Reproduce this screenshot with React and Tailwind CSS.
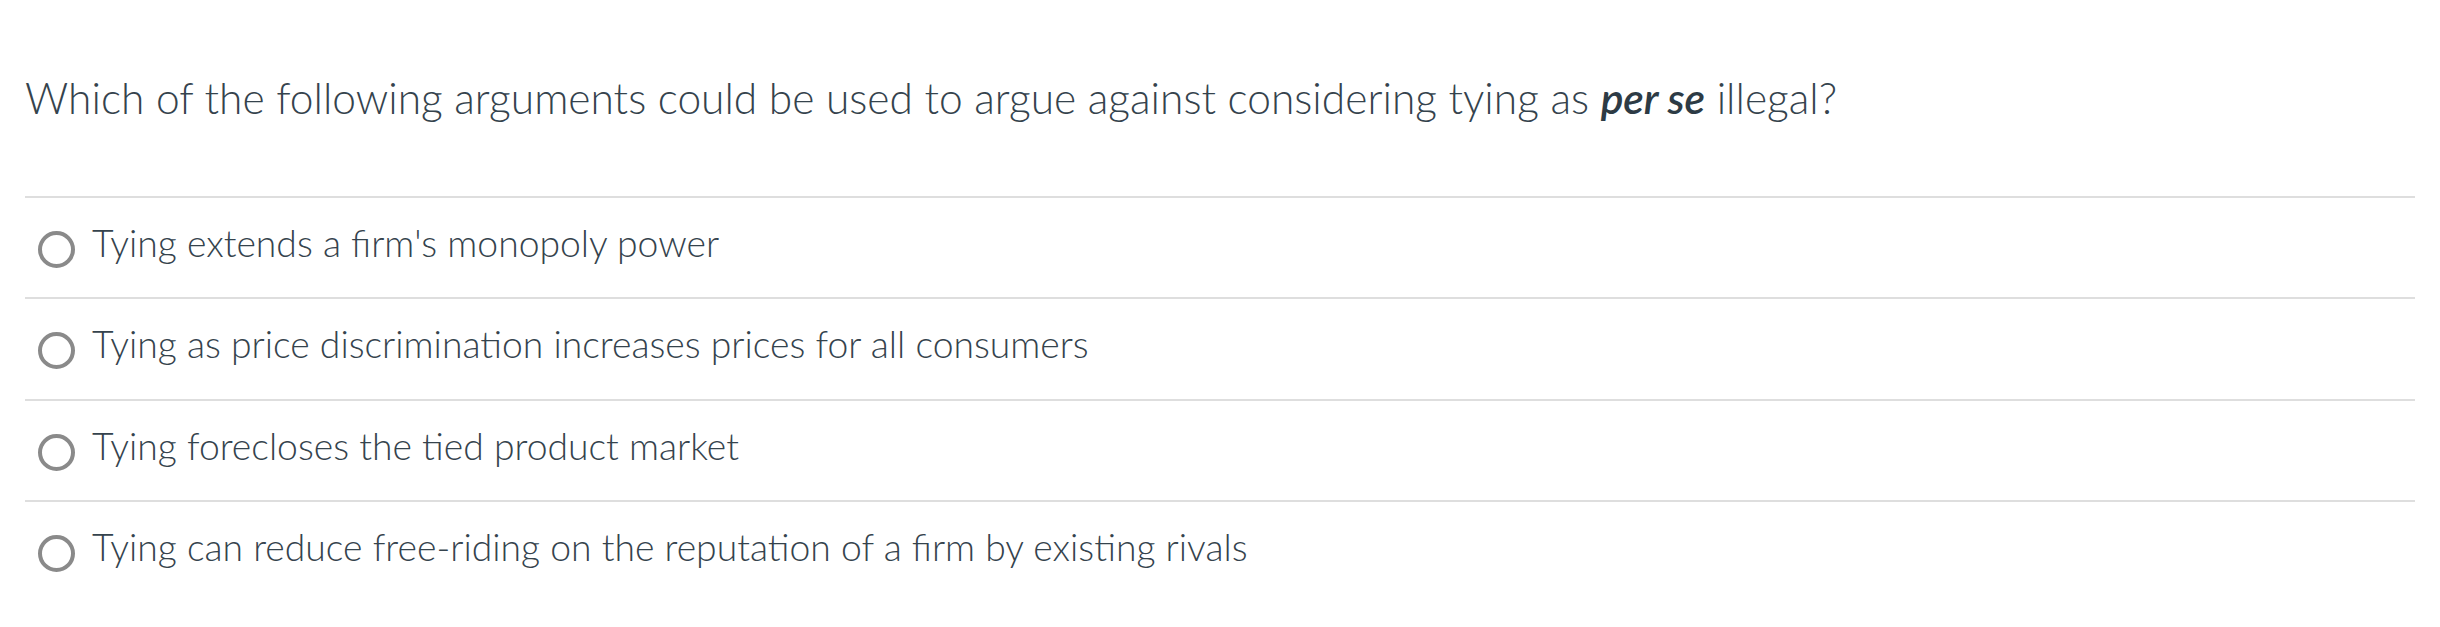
const options = [
  "Tying extends a firm's monopoly power",
  "Tying as price discrimination increases prices for all consumers",
  "Tying forecloses the tied product market",
  "Tying can reduce free-riding on the reputation of a firm by existing rivals",
];

export default function App() {
  return (
    <div className="w-[2440px] h-[627px] bg-white text-[#35434d] font-['Lato','Liberation_Sans',sans-serif] px-[25px] pt-[72px]">
      <p className="text-[42.5px] font-light leading-[1.2]">
        Which of the following arguments could be used to argue against considering tying as{" "}
        <em className="font-semibold text-[#2d3b45]">per se</em> illegal?
      </p>

      <div className="mt-[73px]">
        {options.map((opt) => (
          <div
            key={opt}
            className="h-[101.3px] border-t-2 border-[#dedede] flex items-start pt-[23px]"
          >
            <span className="mt-[10px] ml-[13px] w-[37px] h-[37px] shrink-0 rounded-full border-[4px] border-[#8a8a8a]" />
            <span className="ml-[17px] text-[37.3px] font-light leading-[1.2]">{opt}</span>
          </div>
        ))}
      </div>
    </div>
  );
}
